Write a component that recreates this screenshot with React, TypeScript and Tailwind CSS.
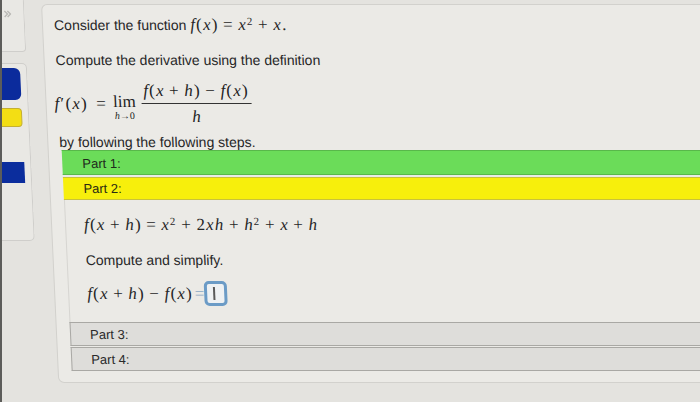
import React from "react";

const sans = "font-['Liberation_Sans',Arial,sans-serif]";
const serif = "font-['Liberation_Serif','Times_New_Roman',serif] tracking-[0.07em]";

function Op({ c }: { c: string }) {
  return <span className="mx-[0.26em]">{c}</span>;
}

function Part({ label, tone }: { label: string; tone: "green" | "yellow" | "gray" }) {
  if (tone === "green")
    return (
      <div className="h-[25px] flex items-center pl-[20px] pt-[2px] bg-[#6bdc59] border-t border-b border-[#58b84a] text-[13px] text-[#1f2a1c]">
        {label}
      </div>
    );
  if (tone === "yellow")
    return (
      <div className="mt-[2px] h-[23px] flex items-center pl-[20px] pt-[1px] bg-[#f7ef0c] border-t border-b border-[#c9c23a] text-[13px] text-[#2a2a12]">
        {label}
      </div>
    );
  return (
    <div className="h-[24px] flex items-center pl-[19px] pt-[1px] bg-[#dedddA] border-t border-b border-l border-[#a9a8a4] text-[13px] text-[#2a2a2a]">
      {label}
    </div>
  );
}

export default function App() {
  return (
    <div className={`w-[700px] h-[402px] overflow-hidden bg-[#e4e3df] border-l-2 border-[#5c5c5a] ${sans}`}>
      <div className="w-[722px] h-[402px] -ml-[2px] skew-x-[2.6deg] flex items-start">
        {/* sidebar */}
        <div className="w-[33px] flex flex-col shrink-0">
          <div className="h-[52px] bg-[#e9e8e4] border-r border-b border-[#cfcecb] rounded-br-[4px] flex items-start pl-[12px] pt-[10px]">
            <svg width="8" height="8" viewBox="0 0 8 8">
              <path d="M1 1 L4 4 L1 7 M4 1 L7 4 L4 7" stroke="#b9b8b4" strokeWidth="1.3" fill="none" />
            </svg>
          </div>
          <div className="mt-[11px] h-[178px] bg-[#e9e8e4] border-r border-t border-b border-[#cfcecb] rounded-r-[5px] flex flex-col pt-[4px] pr-[6px]">
            <div className="h-[32px] bg-[#0b2b9c] rounded-r-[6px]" />
            <div className="mt-[8px] h-[19px] bg-[#f3de14] border border-[#c5b030] rounded-[4px]" />
            <div className="mt-[35px] h-[21px] bg-[#0b2d9d]" />
          </div>
        </div>

        {/* main card */}
        <div className="ml-[17px] mt-[4px] flex-1 bg-[#ebeae6] border border-[#d2d1cd] rounded-[6px] pl-[11px] pt-[10px] pb-[11px] text-[14px] text-[#262626]">
          <div className="leading-[20px]">
            Consider the function{" "}
            <span className={`${serif} text-[17px] tracking-[0.03em]`}>
              <i>f</i>(<i>x</i>)<Op c="=" /><i>x</i>
              <sup className="text-[11px]">2</sup>
              <Op c="+" />
              <i>x</i>.
            </span>
          </div>
          <div className="mt-[15px] leading-[20px]">Compute the derivative using the definition</div>

          <div className={`mt-[12px] ml-[-3px] flex items-center ${serif} text-[17px] text-[#222]`}>
            <span>
              <i>f</i>′(<i>x</i>)
            </span>
            <span className="ml-[0.5em] mr-[0.35em]">=</span>
            <span className="inline-flex flex-col items-center mt-[6px] tracking-normal">
              <span className="leading-[16px]">lim</span>
              <span className="text-[10px] leading-[11px]">
                <i>h</i>→0
              </span>
            </span>
            <span className="ml-[6px] inline-flex flex-col items-center">
              <span className="px-[2px] pb-[3px] leading-[18px]">
                <i>f</i>(<i>x</i>
                <Op c="+" />
                <i>h</i>)<Op c="−" />
                <i>f</i>(<i>x</i>)
              </span>
              <span className="h-[1px] w-full bg-[#333]" />
              <span className="pt-[4px] leading-[18px]">
                <i>h</i>
              </span>
            </span>
          </div>

          <div className="mt-[7px] leading-[18px]">by following the following steps.</div>

          <div className="ml-[2px] mt-[-1px] flex flex-col">
            <Part label="Part 1:" tone="green" />
            <Part label="Part 2:" tone="yellow" />
            <div className="pl-[18px] pt-[15px] pb-[16px] border-l border-[#d6d5d1]">
              <div className={`${serif} text-[17px] leading-[20px] tracking-[0.03em]`}>
                <i>f</i>(<i>x</i>
                <Op c="+" />
                <i>h</i>)<Op c="=" />
                <i>x</i>
                <sup className="text-[11px]">2</sup>
                <Op c="+" />2<i>xh</i>
                <Op c="+" />
                <i>h</i>
                <sup className="text-[11px]">2</sup>
                <Op c="+" />
                <i>x</i>
                <Op c="+" />
                <i>h</i>
              </div>
              <div className="mt-[15px] leading-[20px]">Compute and simplify.</div>
              <div className={`mt-[11px] h-[25px] flex items-center ${serif} text-[17px]`}>
                <span>
                  <i>f</i>(<i>x</i>
                  <Op c="+" />
                  <i>h</i>)<Op c="−" />
                  <i>f</i>(<i>x</i>)
                </span>
                <span className="ml-[2px] text-[#8aa8c4]">=</span>
                <div className="-ml-[1px] w-[23px] h-[25px] border-[3px] border-[#6b9bc6] rounded-[5px] bg-[#eef1f3] flex items-center pl-[6px]">
                  <div className="w-[1.5px] h-[13px] bg-[#5a5a5a]" />
                </div>
              </div>
            </div>
            <Part label="Part 3:" tone="gray" />
            <div className="mt-[1px]">
              <Part label="Part 4:" tone="gray" />
            </div>
          </div>
        </div>
      </div>
    </div>
  );
}
